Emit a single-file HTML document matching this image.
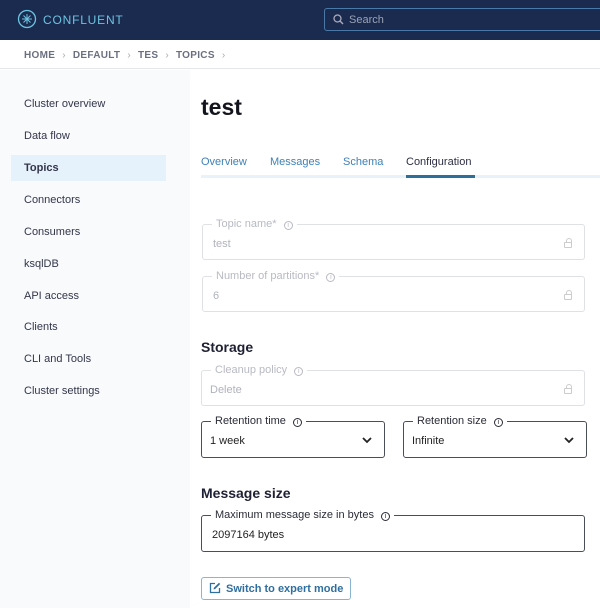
<!DOCTYPE html>
<html><head><style>
*{box-sizing:border-box;margin:0;padding:0}
body{width:600px;height:608px;overflow:hidden;background:#fff;font-family:"Liberation Sans",sans-serif;position:relative;color:#1c1c28}
.a{position:absolute}
.hdr{left:0;top:0;width:600px;height:40px;background:#1b2b4f}
.bc{top:40px;left:0;width:600px;height:29px;border-bottom:1px solid #e4e6ea;font-size:10px;color:#6b7080;font-weight:bold;letter-spacing:.3px;padding:10px 0 0 24px}
.bc span{color:#aaa;margin:0 7px;font-weight:normal}
.side{left:0;top:70px;width:190px;height:538px;background:#f9fafc}
.side div{position:absolute;left:24px;font-size:11px;color:#33364a}
.fs{position:absolute;border:1px solid #dfe1e6;border-radius:3px;padding:0 10px}
.fs legend{font-size:11px;padding:0 4px;margin-left:-1px;color:#b8bac4}
.fs .v{font-size:11px;color:#b0b3bd;margin-top:8px}
.on{border-color:#4a4d5a}
.on legend{color:#2a2c38}
.on .v{color:#222}
.lock{position:absolute;right:12px;top:12px;width:8px;height:6px;border:1px solid #ccc;border-radius:1px}
.lock:before{content:"";position:absolute;left:1px;top:-5px;width:4px;height:4px;border:1px solid #ccc;border-bottom:none;border-radius:3px 3px 0 0}
.i{display:inline-block;width:9px;height:9px;border:1px solid currentColor;border-radius:50%;font-size:7px;line-height:8px;text-align:center;margin-left:4px;vertical-align:0}
.chev{position:absolute;right:12px;top:10px}
h2{position:absolute;font-size:14px;font-weight:bold;color:#1e2033}
</style></head><body>
<div class="a hdr">
 <svg class="a" style="left:17px;top:9px" width="20" height="20" viewBox="0 0 20 20"><circle cx="10" cy="10" r="8.5" fill="none" stroke="#6cc3e0" stroke-width="1.3"/><path d="M10 5v10M5 10h10M6.5 6.5l7 7M13.5 6.5l-7 7" stroke="#6cc3e0" stroke-width="1"/></svg>
 <div class="a" style="left:43px;top:13px;font-size:12px;color:#6cc3e0;letter-spacing:.8px">CONFLUENT</div>
 <div class="a" style="left:324px;top:8px;width:290px;height:23px;border:1px solid #4a79a8;border-radius:3px"></div>
 <svg class="a" style="left:333px;top:14px" width="11" height="11" viewBox="0 0 11 11"><circle cx="4.5" cy="4.5" r="3.5" fill="none" stroke="#aab" stroke-width="1.3"/><path d="M7 7l3 3" stroke="#aab" stroke-width="1.4"/></svg>
 <div class="a" style="left:349px;top:14px;font-size:11px;color:#9aa3b5">Search</div>
</div>
<div class="a bc">HOME<span>›</span>DEFAULT<span>›</span>TES<span>›</span>TOPICS<span>›</span></div>
<div class="a side">
 <div style="top:28px">Cluster overview</div>
 <div style="top:60px">Data flow</div>
 <div style="left:11px;top:85px;width:155px;height:26px;background:#e6f2fb"></div>
 <div style="top:92px;font-weight:bold">Topics</div>
 <div style="top:124px">Connectors</div>
 <div style="top:156px">Consumers</div>
 <div style="top:188px">ksqlDB</div>
 <div style="top:220px">API access</div>
 <div style="top:251px">Clients</div>
 <div style="top:283px">CLI and Tools</div>
 <div style="top:315px">Cluster settings</div>
</div>
<div class="a" style="left:201px;top:94px;font-size:23px;font-weight:bold;color:#14141e">test</div>
<div class="a" style="left:201px;top:156px;font-size:11px;color:#3d82b5">Overview</div>
<div class="a" style="left:270px;top:156px;font-size:11px;color:#3d82b5">Messages</div>
<div class="a" style="left:343px;top:156px;font-size:11px;color:#3d82b5">Schema</div>
<div class="a" style="left:406px;top:156px;font-size:11px;color:#2c2f45">Configuration</div>
<div class="a" style="left:201px;top:175px;width:399px;height:3px;background:#e8f2f8"></div>
<div class="a" style="left:406px;top:175px;width:69px;height:3px;background:#2e6f9a"></div>

<fieldset class="fs" style="left:202px;top:218px;width:383px;height:42px"><legend>Topic name* <span class="i">i</span></legend><div class="v">test</div><div class="lock"></div></fieldset>
<fieldset class="fs" style="left:202px;top:270px;width:383px;height:42px"><legend>Number of partitions* <span class="i">i</span></legend><div class="v">6</div><div class="lock"></div></fieldset>
<h2 style="left:201px;top:339px">Storage</h2>
<fieldset class="fs" style="left:201px;top:364px;width:384px;height:42px;padding-left:8px"><legend style="margin-left:1px">Cleanup policy <span class="i">i</span></legend><div class="v">Delete</div><div class="lock"></div></fieldset>
<fieldset class="fs on" style="left:201px;top:415px;width:184px;height:43px;padding-left:8px"><legend style="margin-left:1px">Retention time <span class="i">i</span></legend><div class="v">1 week</div><svg class="chev" width="10" height="7" viewBox="0 0 10 7"><path d="M1 1l4 4 4-4" fill="none" stroke="#222" stroke-width="1.8"/></svg></fieldset>
<fieldset class="fs on" style="left:403px;top:415px;width:184px;height:43px;padding-left:8px"><legend style="margin-left:1px">Retention size <span class="i">i</span></legend><div class="v">Infinite</div><svg class="chev" width="10" height="7" viewBox="0 0 10 7"><path d="M1 1l4 4 4-4" fill="none" stroke="#222" stroke-width="1.8"/></svg></fieldset>
<h2 style="left:201px;top:485px">Message size</h2>
<fieldset class="fs on" style="left:201px;top:509px;width:384px;height:43px"><legend>Maximum message size in bytes <span class="i">i</span></legend><div class="v">2097164 bytes</div></fieldset>
<div class="a" style="left:201px;top:577px;width:150px;height:23px;border:1px solid #8ab4d4;border-radius:3px;font-size:11px;color:#2f6f9f;font-weight:bold;padding:5px 0 0 24px">Switch to expert mode</div>
<svg class="a" style="left:209px;top:582px" width="12" height="12" viewBox="0 0 12 12"><path d="M6 1.5H1.5v9h9V6" fill="none" stroke="#2f6f9f" stroke-width="1.3"/><path d="M4.5 7.5l.4-1.8L10 .8l1.2 1.2-5 5z" fill="#2f6f9f"/></svg>
</body></html>
